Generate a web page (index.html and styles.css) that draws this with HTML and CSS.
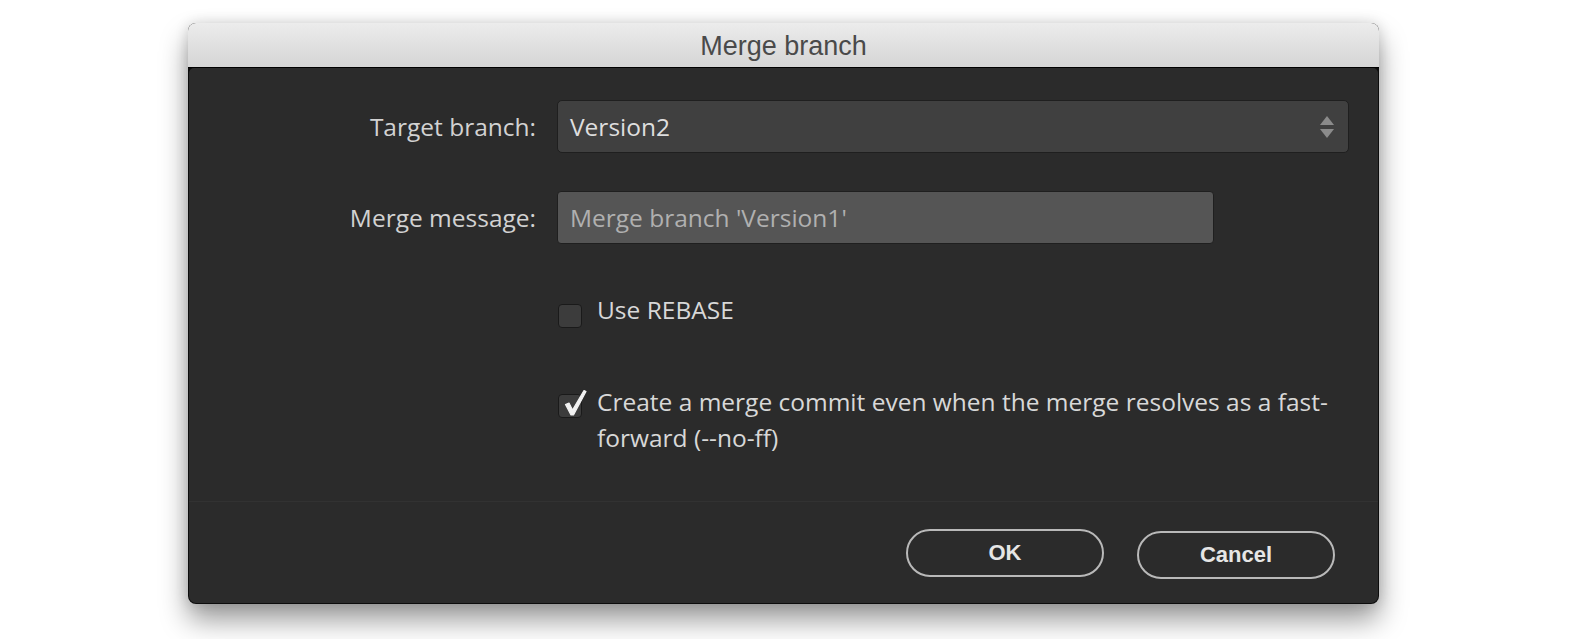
FILE: index.html
```html
<!DOCTYPE html>
<html lang="en">
<head>
  <meta charset="UTF-8">
  <meta name="viewport" content="width=device-width, initial-scale=1.0">
  <title>Merge branch</title>
  <link rel="stylesheet" href="styles.css">
</head>
<body>

  <div class="dialog">
    <div class="titlebar">Merge branch</div>

    <div class="content">
      <div class="form">
        <div class="row">
          <label class="label" for="target">Target branch:</label>
          <div class="select" id="target">
            <span>Version2</span>
            <svg class="arrows" width="16" height="24" viewBox="0 0 16 24">
              <polygon points="8,1 15,10 1,10" fill="#8b8b8b"/>
              <polygon points="1,14 15,14 8,23" fill="#8b8b8b"/>
            </svg>
          </div>
        </div>

        <div class="row message-row">
          <label class="label" for="message">Merge message:</label>
          <input class="input" id="message" type="text" placeholder="Merge branch 'Version1'">
        </div>

        <div class="check-row rebase">
          <span class="box"></span>
          <span class="check-text">Use REBASE</span>
        </div>

        <div class="check-row noff">
          <span class="box checked">
            <svg class="tick" width="26" height="30" viewBox="0 0 26 30">
              <path d="M3.5 16.5 L7 15 L10.5 22 L22 2.5 L24 3.5 L11.5 27 L9 27 Z" fill="#f2f2f2" stroke="#f2f2f2" stroke-width="1.2" stroke-linejoin="round"/>
            </svg>
          </span>
          <span class="check-text">Create a merge commit even when the merge resolves as a fast-forward (--no-ff)</span>
        </div>
      </div>

      <div class="footer">
        <button class="btn">OK</button>
        <button class="btn cancel">Cancel</button>
      </div>
    </div>
  </div>

</body>
</html>
```

FILE: styles.css
```css
body {
  margin: 0;
  padding: 23px 0 35px 0;
  background-color: #fff;
  font-family: "Open Sans", "Noto Sans", sans-serif;
}

.dialog {
  width: 1191px;
  margin-left: 188px;
  background-color: #0c0c0c;
  border-radius: 8px;
  overflow: hidden;
  box-shadow: 0 16px 28px rgba(0, 0, 0, 0.4), 0 0 14px rgba(0, 0, 0, 0.14);
}

.titlebar {
  height: 44px;
  line-height: 46px;
  text-align: center;
  font-family: "Liberation Sans", Arial, sans-serif;
  font-size: 27px;
  color: #4a4a4a;
  background: linear-gradient(#ececec, #d5d5d5);
  border-bottom: 1px solid #000;
}

.content {
  margin: 0 1px 1px 1px;
  background-color: #2b2b2b;
  border-radius: 5px 5px 7px 7px;
}

.form {
  padding: 32px 0 45px 0;
}

.row {
  display: flex;
  align-items: center;
  gap: 21px;
}

.message-row {
  margin-top: 38px;
}

.label {
  width: 347px;
  text-align: right;
  font-size: 24.5px;
  color: #d2d2d2;
}

.select {
  width: 792px;
  height: 53px;
  box-sizing: border-box;
  display: flex;
  align-items: center;
  justify-content: space-between;
  padding: 0 13px 0 12px;
  background-color: #404040;
  border: 1.5px solid #1f1f1f;
  border-radius: 5px;
  font-size: 24.5px;
  color: #dedede;
}

.input {
  width: 657px;
  height: 53px;
  box-sizing: border-box;
  padding: 0 12px;
  background-color: #555;
  border: 1.5px solid #1f1f1f;
  border-radius: 4px;
  font-family: "Open Sans", "Noto Sans", sans-serif;
  font-size: 24.5px;
  outline: none;
}

.input::placeholder {
  color: #b0b0b0;
}

.check-row {
  display: flex;
  align-items: flex-start;
  gap: 15px;
  margin-left: 369px;
  width: 775px;
  font-size: 24.5px;
  line-height: 36px;
  color: #d8d8d8;
}

.rebase {
  margin-top: 48px;
}

.rebase .box {
  margin-top: 12px;
}

.noff {
  margin-top: 56px;
}

.noff .box {
  margin-top: 10px;
}

.box {
  position: relative;
  flex: none;
  width: 24px;
  height: 24px;
  box-sizing: border-box;
  background-color: #3c3c3c;
  border: 1.5px solid #1a1a1a;
  border-radius: 4px;
}

.tick {
  position: absolute;
  left: 3px;
  top: -7px;
}

.footer {
  display: flex;
  justify-content: flex-end;
  gap: 33px;
  height: 102px;
  padding: 27px 43px 0 0;
  box-sizing: border-box;
  border-top: 1px solid #323232;
}

.btn {
  width: 198px;
  height: 48px;
  background: transparent;
  border: 2px solid #b9b9b9;
  border-radius: 24px;
  font-family: "Liberation Sans", Arial, sans-serif;
  font-weight: bold;
  font-size: 22px;
  color: #e6e6e6;
  cursor: pointer;
}

.cancel {
  margin-top: 2px;
}
```
